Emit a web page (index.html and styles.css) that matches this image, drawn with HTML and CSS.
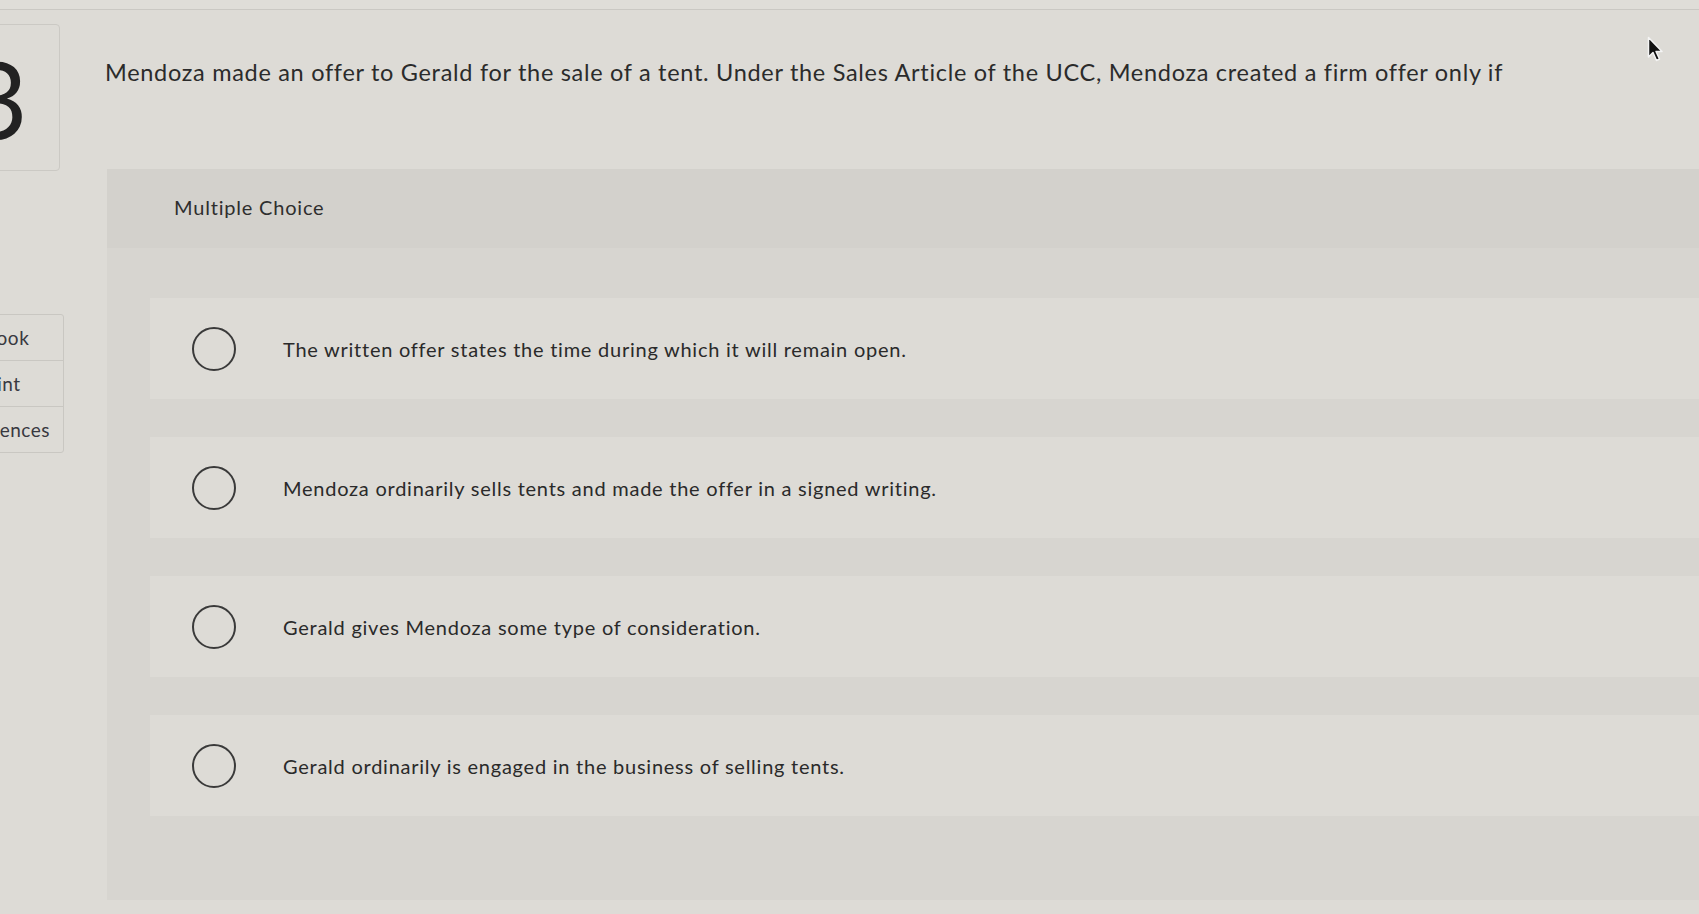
FILE: index.html
```html
<!DOCTYPE html>
<html lang="en">
<head>
<meta charset="utf-8">
<title>Multiple Choice</title>
<link rel="stylesheet" href="styles.css">
</head>
<body>
<div class="topbar"></div>
<div class="layout">
  <aside class="side">
    <div class="qnum">3</div>
    <ul class="tools">
      <li>eBook</li>
      <li>Hint</li>
      <li>References</li>
    </ul>
  </aside>
  <main class="main">
    <p class="question">Mendoza made an offer to Gerald for the sale of a tent. Under the Sales Article of the UCC, Mendoza created a firm offer only if</p>
    <section class="mc">
      <div class="mc-head">Multiple Choice</div>
      <div class="options">
        <label class="opt"><span class="radio"></span><span class="opt-text">The written offer states the time during which it will remain open.</span></label>
        <label class="opt"><span class="radio"></span><span class="opt-text">Mendoza ordinarily sells tents and made the offer in a signed writing.</span></label>
        <label class="opt"><span class="radio"></span><span class="opt-text">Gerald gives Mendoza some type of consideration.</span></label>
        <label class="opt"><span class="radio"></span><span class="opt-text">Gerald ordinarily is engaged in the business of selling tents.</span></label>
      </div>
    </section>
  </main>
</div>
<svg class="cursor" width="18" height="28" viewBox="0 0 18 28">
  <path d="M1.5 1.5 L1.5 21 L6 16.5 L9.5 24.5 L12.5 23 L9 15.5 L15 15.5 Z" fill="#111" stroke="#f4f4f4" stroke-width="1.5" stroke-linejoin="round"/>
</svg>
</body>
</html>
```

FILE: styles.css
```css
html, body {
  margin: 0;
  padding: 0;
}
body {
  width: 1699px;
  height: 914px;
  overflow: hidden;
  background: #dddbd6;
  font-family: Lato, "Open Sans", "Liberation Sans", sans-serif;
  color: #2b2b2b;
  position: relative;
}
.topbar {
  height: 9px;
  border-bottom: 1px solid #cac8c3;
  background: #dfddd8;
}
.layout {
  display: flex;
  height: 904px;
}
.side {
  width: 105px;
  flex: none;
  overflow: hidden;
}
.qnum {
  margin-top: 14px;
  margin-left: -66px;
  width: 124px;
  height: 145px;
  border: 1px solid #cbc9c4;
  border-radius: 4px;
  display: flex;
  align-items: center;
  justify-content: center;
  font-size: 106px;
  line-height: 1;
  color: #222;
}
.tools {
  list-style: none;
  margin: 143px 0 0 -61px;
  padding: 0;
  width: 123px;
  border: 1px solid #c9c7c2;
  border-radius: 3px;
}
.tools li {
  height: 45px;
  display: flex;
  align-items: center;
  justify-content: center;
  font-size: 19px;
  letter-spacing: 0.5px;
  color: #383840;
  border-top: 1px solid #c9c7c2;
}
.tools li:first-child {
  border-top: none;
}
.main {
  flex: 1;
  min-width: 0;
}
.question {
  margin: 47px 0 0 0;
  font-size: 23.5px;
  letter-spacing: 0.7px;
  line-height: 30px;
  white-space: nowrap;
}
.mc {
  margin: 82px 0 0 2px;
  height: 731px;
  background: #d7d5d0;
}
.mc-head {
  height: 79px;
  padding: 0 0 4px 67px;
  box-sizing: border-box;
  display: flex;
  align-items: center;
  background: #d3d1cc;
  font-size: 20px;
  letter-spacing: 0.8px;
  color: #2e2e2e;
}
.options {
  padding: 50px 0 0 43px;
  display: flex;
  flex-direction: column;
  gap: 38px;
}
.opt {
  height: 101px;
  background: #dddbd6;
  display: flex;
  align-items: center;
  padding-left: 42px;
  gap: 47px;
}
.radio {
  width: 40px;
  height: 40px;
  border: 2px solid #3a3a3a;
  border-radius: 50%;
  flex: none;
}
.opt-text {
  font-size: 20px;
  letter-spacing: 0.75px;
  color: #2a2a2a;
}
.cursor {
  position: absolute;
  left: 1647px;
  top: 36px;
}
```
